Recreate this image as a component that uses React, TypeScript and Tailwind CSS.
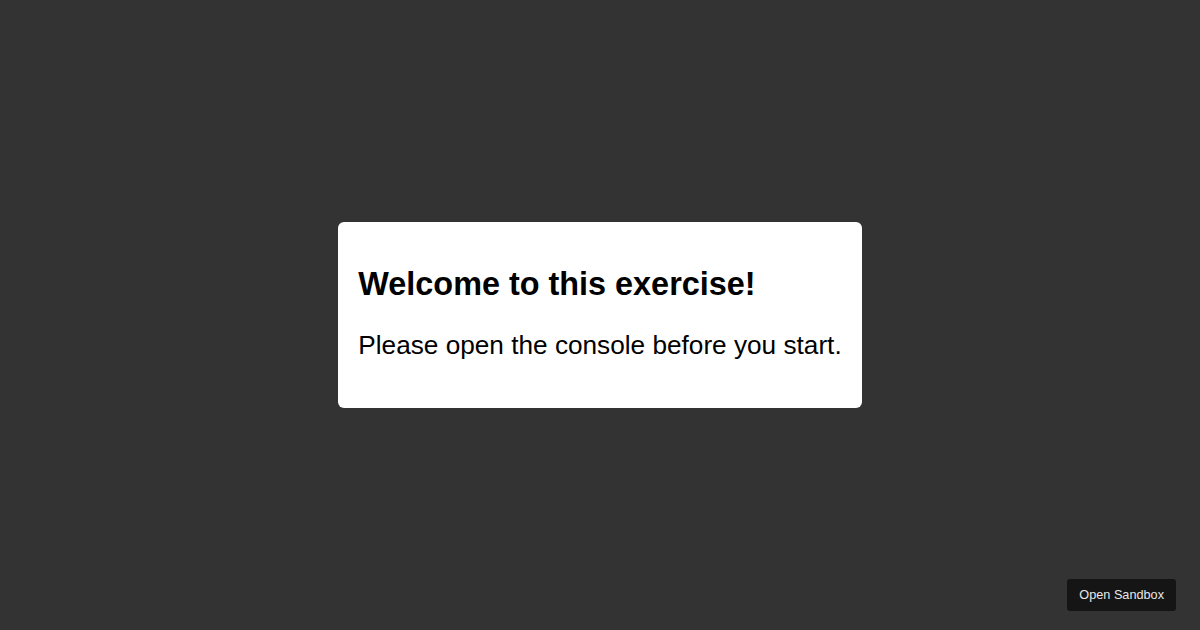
import React from "react";

export default function App() {
  return (
    <div
      className="relative w-full h-[630px] bg-[#333333] flex items-center justify-center"
      style={{ fontFamily: '"Liberation Sans", Arial, Helvetica, sans-serif' }}
    >
      <div className="bg-white rounded-[6px] px-5 pt-[38px] pb-[45px] text-black">
        <h1 className="text-[32.4px] leading-[48px] font-bold">Welcome to this exercise!</h1>
        <p className="mt-[19px] text-[26.2px] leading-[36px]">Please open the console before you start.</p>
      </div>
      <button className="absolute right-[24px] bottom-[19px] h-[32px] px-3 pt-[1px] bg-[#151515] text-[#e8e8e8] text-[12.7px] rounded-[3px]">
        Open Sandbox
      </button>
    </div>
  );
}
